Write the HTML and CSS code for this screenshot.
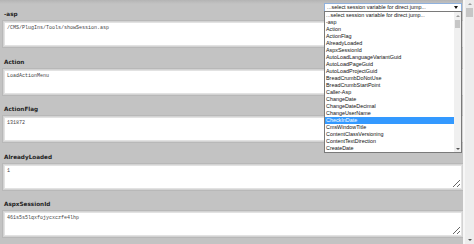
FILE: index.html
```html
<!DOCTYPE html>
<html lang="en">
<head>
    <meta charset="UTF-8">
    <meta name="viewport" content="width=device-width, initial-scale=1.0">
    <title>Session Variables</title>
    <link rel="stylesheet" href="styles.css">
</head>
<body>
    <div class="page">
        <div class="sessions">
            <div class="var">
                <label class="var-name">-asp</label>
                <textarea class="var-value">/CMS/PlugIns/Tools/showSession.asp</textarea>
            </div>
            <div class="var">
                <label class="var-name">Action</label>
                <textarea class="var-value">LoadActionMenu</textarea>
            </div>
            <div class="var">
                <label class="var-name">ActionFlag</label>
                <textarea class="var-value">131872</textarea>
            </div>
            <div class="var">
                <label class="var-name">AlreadyLoaded</label>
                <textarea class="var-value">1</textarea>
            </div>
            <div class="var">
                <label class="var-name">AspxSessionId</label>
                <textarea class="var-value">461s5s5lqxfojycxczfe4lhp</textarea>
            </div>
        </div>

        <div class="page-scroll">
            <div class="scroll-btn"><span class="arrow-up"></span></div>
            <div class="scroll-track"><div class="scroll-thumb"></div></div>
            <div class="scroll-btn"><span class="arrow-down"></span></div>
        </div>
    </div>

    <!-- jump menu, shown open -->
    <div class="jump">
        <div class="jump-field">
            <span>...select session variable for direct jump...</span>
            <span class="arrow-down dark"></span>
        </div>
        <div class="jump-list">
            <ul class="jump-items">
                <li>...select session variable for direct jump...</li>
                <li>-asp</li>
                <li>Action</li>
                <li>ActionFlag</li>
                <li>AlreadyLoaded</li>
                <li>AspxSessionId</li>
                <li>AutoLoadLanguageVariantGuid</li>
                <li>AutoLoadPageGuid</li>
                <li>AutoLoadProjectGuid</li>
                <li>BreadCrumbDoNotUse</li>
                <li>BreadCrumbStartPoint</li>
                <li>Caller-Asp</li>
                <li>ChangeDate</li>
                <li>ChangeDateDecimal</li>
                <li>ChangeUserName</li>
                <li class="selected">CheckInDate</li>
                <li>CmsWindowTitle</li>
                <li>ContentClassVersioning</li>
                <li>ContentTextDirection</li>
                <li>CreateDate</li>
            </ul>
            <div class="list-scroll">
                <div class="list-btn"><span class="arrow-up"></span></div>
                <div class="list-track"><div class="list-thumb"></div></div>
                <div class="list-btn"><span class="arrow-down"></span></div>
            </div>
        </div>
    </div>
</body>
</html>
```

FILE: styles.css
```css
* {
    margin: 0;
    padding: 0;
    box-sizing: border-box;
}

body {
    background: linear-gradient(#b4b4b4, #c3c3c3 4px);
    font-family: "Liberation Sans", Arial, sans-serif;
    overflow: hidden;
}

.page {
    display: flex;
    height: 244px;
}

.sessions {
    flex: 1;
    padding: 3px 1px 0 4px;
}

.var {
    padding: 8px 0 4.5px;
}

.var-name {
    display: block;
    height: 7px;
    line-height: 7px;
    font-family: "DejaVu Sans", Verdana, sans-serif;
    font-weight: bold;
    font-size: 5.7px;
    color: #1e1e1e;
}

.var-value {
    display: block;
    width: 100%;
    height: 24px;
    margin-top: 4px;
    padding: 2px 2px;
    border: 1px solid #e2e2e2;
    box-shadow: 0 0 0 1px #d3d3d3, 0 0 0 2px #b8b8b8;
    background: #fff;
    font-family: "Liberation Mono", "Courier New", monospace;
    font-size: 5px;
    line-height: 6px;
    color: #444;
    overflow: hidden;
}

/* page scrollbar */
.page-scroll {
    width: 11px;
    display: flex;
    flex-direction: column;
    background: #ededed;
    border-left: 2px solid #f7f7f7;
}

.scroll-btn {
    height: 8px;
    display: flex;
    align-items: center;
    justify-content: center;
}

.scroll-track {
    flex: 1;
}

.scroll-thumb {
    width: 7px;
    height: 9px;
    margin: 0 auto;
    background: #c6c6c6;
}

.arrow-up {
    width: 0;
    height: 0;
    border-left: 2px solid transparent;
    border-right: 2px solid transparent;
    border-bottom: 2px solid #9a9a9a;
}

.arrow-down {
    width: 0;
    height: 0;
    border-left: 2px solid transparent;
    border-right: 2px solid transparent;
    border-top: 2px solid #555;
}

.arrow-down.dark {
    border-left-width: 2.5px;
    border-right-width: 2.5px;
    border-top: 3px solid #111;
}

/* jump menu */
.jump {
    position: absolute;
    top: 3px;
    left: 324px;
    width: 138px;
    font-size: 5.4px;
}

.jump-field {
    height: 9px;
    display: flex;
    align-items: center;
    justify-content: space-between;
    padding: 0 3px 0 2px;
    background: #fff;
    border: 1px solid #8fb1dd;
    line-height: 7px;
    color: #111;
}

.jump-list {
    display: flex;
    margin-top: -1px;
    background: #fff;
    border: 1px solid #7a7a7a;
}

.jump-items {
    flex: 1;
    list-style: none;
}

.jump-items li {
    height: 7px;
    line-height: 7px;
    padding-left: 1px;
    color: #111;
    white-space: nowrap;
}

.jump-items li.selected {
    background: #3399ff;
    color: #fff;
}

.list-scroll {
    width: 7px;
    display: flex;
    flex-direction: column;
    background: #f0f0f0;
}

.list-btn {
    height: 7px;
    display: flex;
    align-items: center;
    justify-content: center;
}

.list-track {
    flex: 1;
}

.list-thumb {
    width: 5px;
    height: 8px;
    margin: 1px auto 0;
    background: #c6c6c6;
}
```
